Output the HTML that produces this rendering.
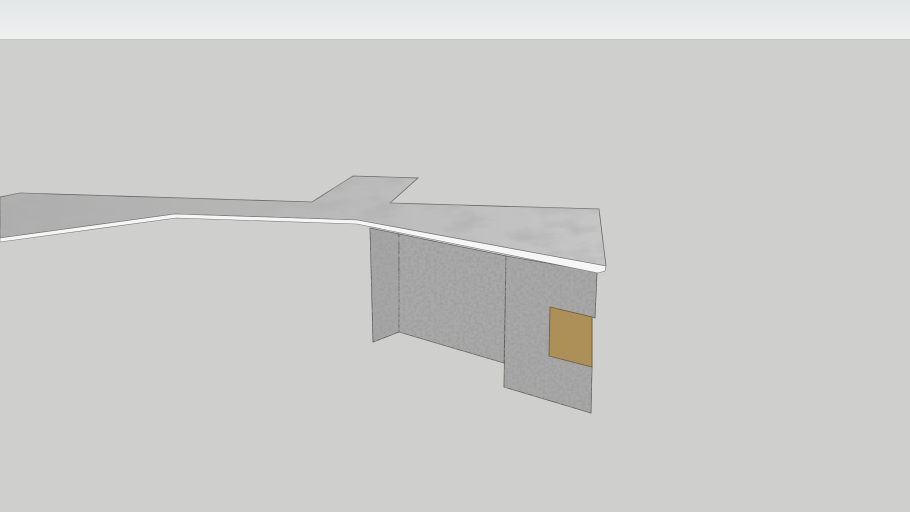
<!DOCTYPE html>
<html><head><meta charset="utf-8"><style>
html,body{margin:0;padding:0;width:910px;height:512px;overflow:hidden;background:#cfcfcd}
</style></head><body>
<svg width="910" height="512" viewBox="0 0 910 512" xmlns="http://www.w3.org/2000/svg">
<defs>
<linearGradient id="sky" x1="0" y1="0" x2="0" y2="1">
<stop offset="0" stop-color="#e3e7e8"/><stop offset="1" stop-color="#eff0f0"/>
</linearGradient>
<linearGradient id="slab" x1="0" y1="0" x2="1" y2="0">
<stop offset="0" stop-color="#adadad"/><stop offset="0.4" stop-color="#b6b6b6"/><stop offset="1" stop-color="#c6c6c6"/>
</linearGradient>
<filter id="marble" x="0" y="0" width="100%" height="100%">
<feTurbulence type="fractalNoise" baseFrequency="0.025 0.07" numOctaves="4" seed="4"/>
<feColorMatrix type="matrix" values="0 0 0 0 0.45  0 0 0 0 0.45  0 0 0 0 0.45  0 0 0 -3 1.7"/>
<feComposite in2="SourceGraphic" operator="in"/>
</filter>
<filter id="conc" x="0" y="0" width="100%" height="100%">
<feTurbulence type="fractalNoise" baseFrequency="0.35" numOctaves="2" seed="2"/>
<feColorMatrix type="matrix" values="0 0 0 0 0.35  0 0 0 0 0.35  0 0 0 0 0.35  0 0 0 -3 1.9"/>
<feComposite in2="SourceGraphic" operator="in"/>
</filter>
</defs>
<rect x="0" y="0" width="910" height="39" fill="url(#sky)"/>
<rect x="0" y="39" width="910" height="1" fill="#c4c6c6"/>
<rect x="0" y="40" width="910" height="472" fill="#cfcfcd"/>

<g stroke="#555" stroke-width="0.8">
<polygon points="370,228 399,234 399,332 373,342" fill="#a6a6a6"/>
<polygon points="399,234 506,256 504,363 399,332" fill="#a9a9a9"/>
<polygon points="506,256 597,272 595,318 592,317 592,367 591,413 504,387" fill="#a8a8a8"/>
</g>
<g filter="url(#conc)">
<polygon points="370,228 399,234 399,332 373,342" fill="#a9a9a9"/>
<polygon points="399,234 506,256 504,363 399,332" fill="#acacac"/>
<polygon points="506,256 597,272 595,318 592,317 592,367 591,413 504,387" fill="#aaaaaa"/>
</g>
<polygon points="550,307 592,317 592,367 549,356" fill="#ad9057" stroke="#6a5a36" stroke-width="0.8"/>

<polygon points="0,197 20,193 312,202 353,176 418,178 390,203 599,209 606,266 357,220 175,214 0,238" fill="url(#slab)" stroke="#666" stroke-width="0.8"/>
<polygon points="0,197 20,193 312,202 353,176 418,178 390,203 599,209 606,266 357,220 175,214 0,238" fill="#888" filter="url(#marble)" opacity="0.7"/>
<polygon points="0,238 175,214 357,220 606,266 605,271 598,273 357,224 176,218 0,242" fill="#f6f6f6" stroke="#777" stroke-width="0.6"/>
</svg>
</body></html>
